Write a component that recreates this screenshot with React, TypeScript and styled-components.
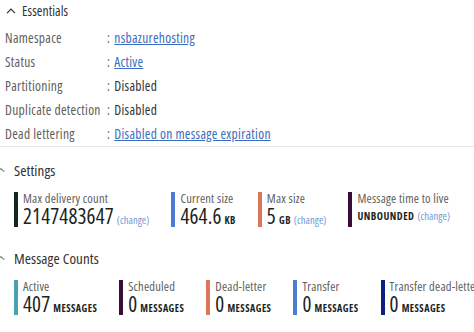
import React from "react";
import styled, { createGlobalStyle } from "styled-components";

const GlobalStyle = createGlobalStyle`
  html, body {
    margin: 0;
    padding: 0;
    background: #fff;
    overflow: hidden;
  }
  body {
    font-family: "Open Sans", "Noto Sans", sans-serif;
    font-stretch: 75%;
    color: #323130;
  }
`;

const palette = {
  text: "#323130",
  label: "#605e5c",
  link: "#3a6cc0",
  change: "#6b98d6",
  line: "#e6e6e6",
};

interface Metric {
  label: string;
  value: string;
  unit?: string;
  change?: boolean;
  color: string;
}

const settings: Metric[] = [
  { label: "Max delivery count", value: "2147483647", change: true, color: "#10291f" },
  { label: "Current size", value: "464.6", unit: "KB", color: "#4a7dd2" },
  { label: "Max size", value: "5", unit: "GB", change: true, color: "#dc785a" },
  { label: "Message time to live", value: "", unit: "UNBOUNDED", change: true, color: "#3a0c38" },
];

const counts: Metric[] = [
  { label: "Active", value: "407", unit: "MESSAGES", color: "#4aa2ac" },
  { label: "Scheduled", value: "0", unit: "MESSAGES", color: "#3a0c38" },
  { label: "Dead-letter", value: "0", unit: "MESSAGES", color: "#dc785a" },
  { label: "Transfer", value: "0", unit: "MESSAGES", color: "#4a7dd2" },
  { label: "Transfer dead-letter", value: "0", unit: "MESSAGES", color: "#0e1f80" },
];

const essentials = [
  { label: "Namespace", value: "nsbazurehosting", link: true },
  { label: "Status", value: "Active", link: true },
  { label: "Partitioning", value: "Disabled" },
  { label: "Duplicate detection", value: "Disabled" },
  { label: "Dead lettering", value: "Disabled on message expiration", link: true },
];

const Chevron = ({ size = 10 }: { size?: number }) => (
  <svg width={size} height={6} viewBox="0 0 10 6" fill="none">
    <path d="M1 5.2 L5 1.2 L9 5.2" stroke="#323130" strokeWidth="1.2" />
  </svg>
);

const App = () => {
  return (
    <Page>
      <GlobalStyle />
      <EssentialsBlock>
        <EssentialsHeader>
          <Chevron />
          <span>Essentials</span>
        </EssentialsHeader>
        <PropList>
          {essentials.map((row) => (
            <PropRow key={row.label}>
              <PropLabel>{row.label}</PropLabel>
              <PropValue>
                <span className="colon">:</span>
                {row.link ? <a href="#">{row.value}</a> : <span>{row.value}</span>}
              </PropValue>
            </PropRow>
          ))}
        </PropList>
      </EssentialsBlock>

      <Section>
        <SectionHeader>
          <Chevron size={8} />
          <span>Settings</span>
        </SectionHeader>
        <CardRow>
          {settings.map((m) => (
            <MetricCard key={m.label} metric={m} />
          ))}
        </CardRow>
      </Section>

      <Section $top={20}>
        <SectionHeader>
          <Chevron size={8} />
          <span>Message Counts</span>
        </SectionHeader>
        <CardRow>
          {counts.map((m) => (
            <MetricCard key={m.label} metric={m} />
          ))}
        </CardRow>
      </Section>
    </Page>
  );
};

const MetricCard = ({ metric }: { metric: Metric }) => (
  <Card>
    <Bar $color={metric.color} />
    <CardBody>
      <CardLabel>{metric.label}</CardLabel>
      <CardValue>
        {metric.value && <span className="num">{metric.value}</span>}
        {metric.unit && <Unit $big={!metric.value}>{metric.unit}</Unit>}
        {metric.change && <Change href="#">(change)</Change>}
      </CardValue>
    </CardBody>
  </Card>
);

const Page = styled.div`
  width: 474px;
  height: 332px;
  overflow: hidden;
`;

const EssentialsBlock = styled.div`
  border-bottom: 1px solid ${palette.line};
`;

const EssentialsHeader = styled.div`
  display: flex;
  align-items: center;
  gap: 6px;
  height: 22px;
  padding-left: 6px;
  font-size: 13.5px;
  letter-spacing: 0.1px;
  color: ${palette.text};
  svg {
    margin-top: -1px;
  }
`;

const PropList = styled.div`
  margin-top: 4px;
  padding-left: 5px;
`;

const PropRow = styled.div`
  display: grid;
  grid-template-columns: 102px 1fr;
  height: 24px;
  align-items: center;
  font-size: 13.5px;
  letter-spacing: 0.3px;
`;

const PropLabel = styled.span`
  color: ${palette.label};
  white-space: nowrap;
`;

const PropValue = styled.span`
  color: ${palette.text};
  white-space: nowrap;
  .colon {
    color: ${palette.label};
    margin-right: 4px;
  }
  a {
    color: ${palette.link};
    text-decoration: underline;
  }
`;

const Section = styled.div<{ $top?: number }>`
  margin-top: ${(p) => p.$top ?? 12}px;
`;

const SectionHeader = styled.div`
  display: flex;
  align-items: center;
  gap: 9px;
  height: 22px;
  font-size: 15px;
  letter-spacing: 0.1px;
  color: ${palette.text};
  svg {
    margin-left: -3px;
  }
`;

const CardRow = styled.div`
  display: flex;
  flex-wrap: nowrap;
  gap: 22px;
  margin-top: 11px;
  padding-left: 14px;
`;

const Card = styled.div`
  display: flex;
  flex-shrink: 0;
  gap: 5px;
`;

const Bar = styled.div<{ $color: string }>`
  width: 4px;
  align-self: stretch;
  background: ${(p) => p.$color};
`;

const CardBody = styled.div`
  display: flex;
  flex-direction: column;
  white-space: nowrap;
`;

const CardLabel = styled.div`
  font-size: 12.5px;
  line-height: 14px;
  letter-spacing: 0.2px;
  color: ${palette.label};
`;

const CardValue = styled.div`
  display: flex;
  align-items: baseline;
  gap: 3px;
  height: 21px;
  .num {
    font-size: 21px;
    line-height: 21px;
    letter-spacing: 0.15px;
    color: #201f1e;
  }
`;

const Unit = styled.span<{ $big?: boolean }>`
  font-size: ${(p) => (p.$big ? 10.5 : 10)}px;
  font-weight: 700;
  letter-spacing: 0.45px;
  color: #201f1e;
  line-height: 21px;
`;

const Change = styled.a`
  font-size: 10.5px;
  letter-spacing: 0.1px;
  color: ${palette.change};
  text-decoration: none;
`;

export default App;
